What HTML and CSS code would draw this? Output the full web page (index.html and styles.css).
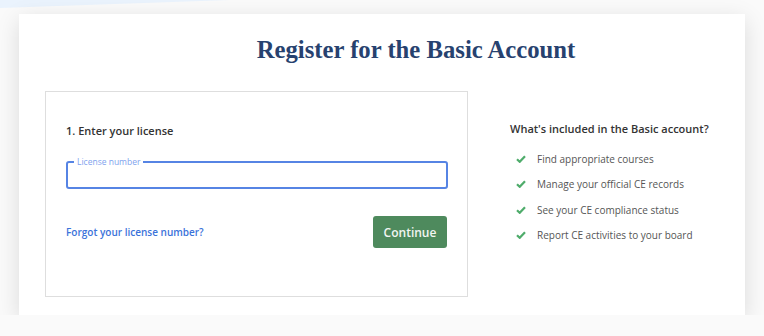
FILE: index.html
```html
<!DOCTYPE html>
<html lang="en">
<head>
  <meta charset="UTF-8" />
  <meta name="viewport" content="width=device-width, initial-scale=1.0"/>
  <title>Register for the Basic Account</title>
  <link rel="stylesheet" href="styles.css">
</head>
<body>
  <div class="swoosh"></div>

  <div class="card">
    <h1 class="page-title">Register for the Basic Account</h1>

    <div class="content">
      <div class="license-box">
        <h2 class="step-title">1. Enter your license</h2>

        <fieldset class="field">
          <legend>License number</legend>
          <input type="text" id="licenseNumber">
        </fieldset>

        <div class="actions">
          <a href="#" class="forgot-link">Forgot your license number?</a>
          <button class="btn-continue">Continue</button>
        </div>
      </div>

      <div class="included">
        <h2 class="included-title">What's included in the Basic account?</h2>
        <ul class="feature-list">
          <li><svg class="check" viewBox="0 0 10 8"><path d="M1 4.2 L3.7 6.8 L9 1.2" /></svg> Find appropriate courses</li>
          <li><svg class="check" viewBox="0 0 10 8"><path d="M1 4.2 L3.7 6.8 L9 1.2" /></svg> Manage your official CE records</li>
          <li><svg class="check" viewBox="0 0 10 8"><path d="M1 4.2 L3.7 6.8 L9 1.2" /></svg> See your CE compliance status</li>
          <li><svg class="check" viewBox="0 0 10 8"><path d="M1 4.2 L3.7 6.8 L9 1.2" /></svg> Report CE activities to your board</li>
        </ul>
      </div>
    </div>
  </div>
</body>
</html>
```

FILE: styles.css
```css
body {
  margin: 0;
  padding: 14px 19px 0;
  font-family: "Open Sans", Arial, sans-serif;
  background-color: #fafafa;
  overflow: hidden;
}

.swoosh {
  position: absolute;
  top: 0;
  left: 0;
  width: 230px;
  height: 8px;
  background-color: #eaf3fd;
  clip-path: polygon(0 0, 100% 0, 0 100%);
}

.card {
  position: relative;
  width: 726px;
  box-sizing: border-box;
  background: #fff;
  padding: 0 26px 18px;
  box-shadow: 0 6px 22px rgba(0, 0, 0, 0.13);
}

.page-title {
  margin: 0;
  padding: 24px 0 0 68px;
  height: 77px;
  box-sizing: border-box;
  text-align: center;
  font-family: "Liberation Serif", "Times New Roman", serif;
  font-size: 24.7px;
  font-weight: bold;
  color: #27426f;
  line-height: 24px;
}

.content {
  display: flex;
  gap: 42px;
}

.license-box {
  width: 423px;
  height: 206px;
  box-sizing: border-box;
  border: 1px solid #dedede;
  padding: 31px 19px 0 20px;
}

.step-title,
.included-title {
  margin: 0;
  font-size: 11px;
  font-weight: 600;
  color: #333;
  line-height: 16px;
}

.field {
  margin: 19px 0 0;
  padding: 0 6px 2px;
  height: 31px;
  box-sizing: border-box;
  border: 2px solid #5684e4;
  border-radius: 3px;
}

.field legend {
  padding: 0 3px;
  font-size: 8.5px;
  line-height: 8px;
  color: #7ea2ee;
}

.field input {
  width: 100%;
  border: none;
  outline: none;
  padding: 0;
  font-family: inherit;
  font-size: 11px;
  background: transparent;
}

.actions {
  display: flex;
  justify-content: space-between;
  align-items: center;
  margin-top: 27px;
}

.forgot-link {
  font-size: 10px;
  font-weight: 600;
  color: #3b73da;
  text-decoration: none;
}

.btn-continue {
  width: 74px;
  height: 32px;
  margin-right: 1px;
  border: none;
  border-radius: 3px;
  background-color: #4e8a5d;
  color: #f2f5f2;
  font-family: inherit;
  font-size: 12px;
  font-weight: 600;
}

.included {
  padding-top: 30px;
}

.feature-list {
  list-style: none;
  margin: 9px 0 0;
  padding: 0 0 0 6px;
}

.feature-list li {
  display: flex;
  align-items: center;
  gap: 11px;
  height: 25.5px;
  font-size: 10px;
  color: #555;
}

.check {
  width: 10px;
  height: 8px;
  fill: none;
  stroke: #4fac6b;
  stroke-width: 2.2;
}
```
